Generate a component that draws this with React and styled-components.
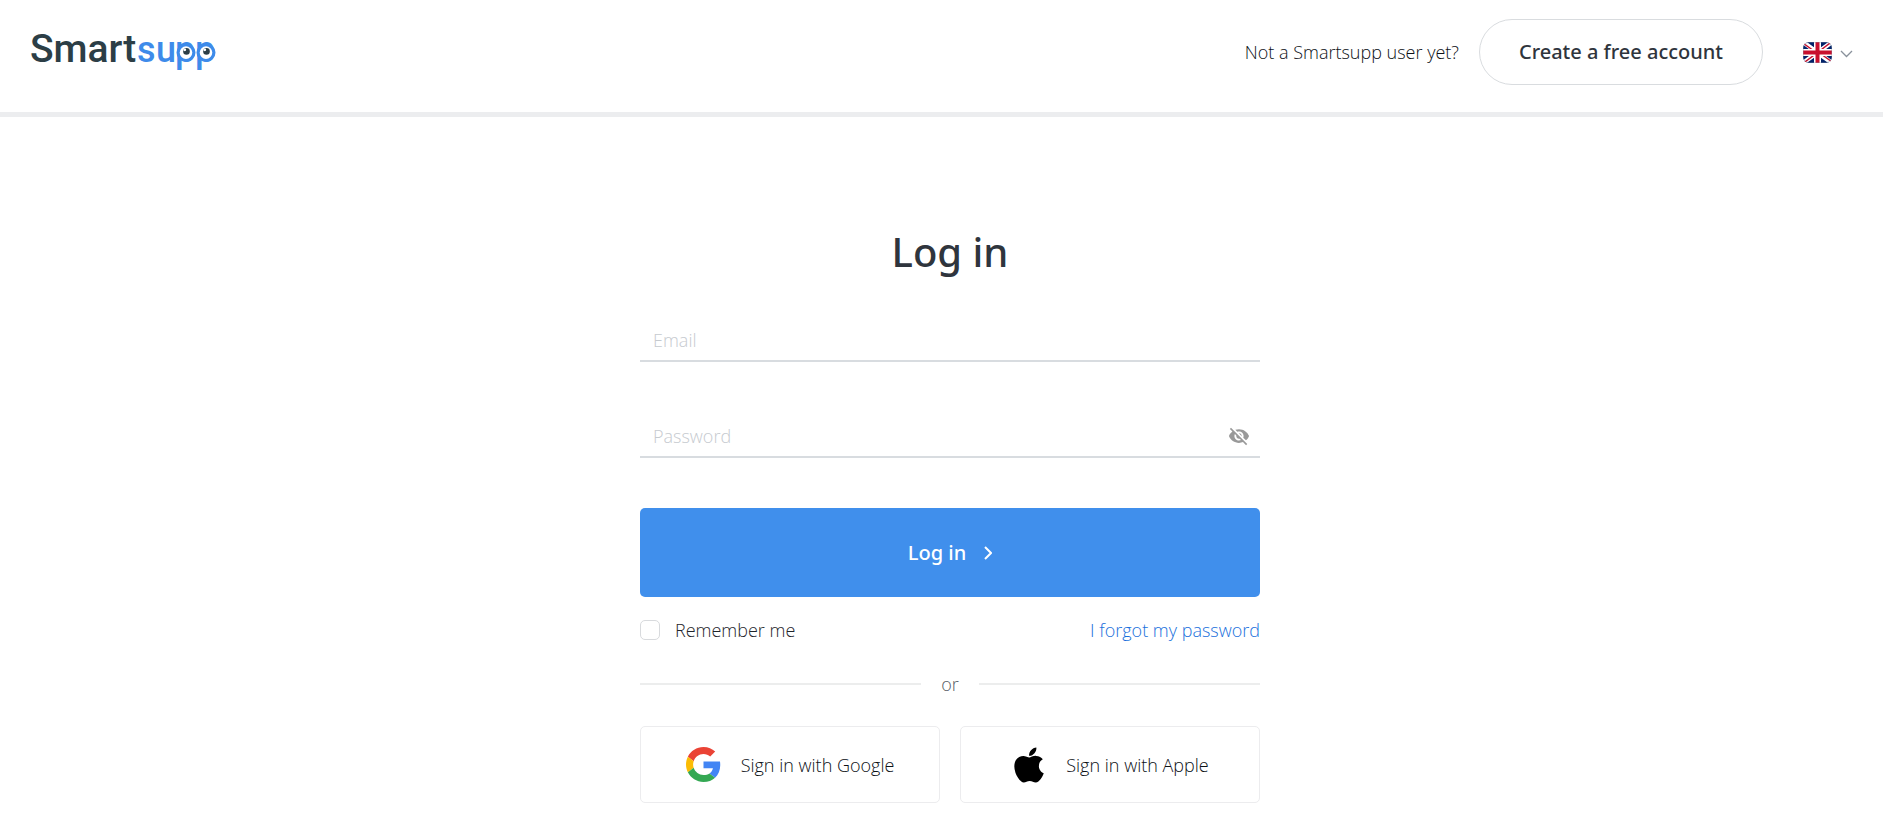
import React from 'react';
import styled, { createGlobalStyle } from 'styled-components';
import { MdVisibilityOff } from 'react-icons/md';
import { FaApple } from 'react-icons/fa';

const GlobalStyle = createGlobalStyle`
  *, *::before, *::after { box-sizing: border-box; }
  body {
    margin: 0;
    background: #fff;
    color: #0c1116;
    font-family: "Open Sans", "Noto Sans", sans-serif;
    font-size: 18px;
    font-weight: 300;
    line-height: 24px;
  }
  button, input { font: inherit; color: inherit; }
  svg { display: block; flex: none; }
`;

const mediumFont = '"Noto Sans", "Open Sans", sans-serif';

const Header = styled.header`
  display: flex;
  align-items: flex-start;
  justify-content: space-between;
  padding: 19px 30px 27px;
  border-bottom: 5px solid #ecedef;
`;

const LogoLink = styled.a`
  text-decoration: none;
`;

const HeaderActions = styled.div`
  display: flex;
  align-items: center;
`;

const SignUpButton = styled.button`
  height: 66px;
  margin: 0 40px 0 20px;
  padding: 0 39px;
  border: 1px solid #d9dcdf;
  border-radius: 33px;
  background: #fff;
  color: #2f353d;
  font-family: ${mediumFont};
  font-size: 20px;
  font-weight: 500;
`;

const LanguageButton = styled.button`
  display: flex;
  align-items: center;
  gap: 8px;
  padding: 0;
  border: 0;
  background: none;
`;

const Main = styled.main`
  padding: 103px 0 30px 17px;
`;

const Form = styled.form`
  display: flex;
  flex-direction: column;
  width: 100%;
  max-width: 620px;
  margin: 0 auto;
`;

const Title = styled.h1`
  margin: 0 0 37px;
  color: #2f353d;
  font-family: ${mediumFont};
  font-size: 40px;
  font-weight: 500;
  line-height: 64px;
  text-align: center;
`;

const Field = styled.label`
  display: flex;
  align-items: center;
  height: 41px;
  margin-bottom: ${(p) => (p.$last ? 50 : 55)}px;
  padding: 0 10px 2px 13px;
  border-bottom: 2px solid #d8dce0;
`;

const FieldInput = styled.input`
  flex: 1;
  min-width: 0;
  height: 36px;
  padding: 0;
  border: 0;
  outline: 0;
  background: none;
  &::placeholder { color: #c6cacf; opacity: 1; }
`;

const IconButton = styled.button`
  padding: 0;
  border: 0;
  background: none;
  color: #999;
`;

const SubmitButton = styled.button`
  display: flex;
  align-items: center;
  justify-content: center;
  gap: 18px;
  height: 89px;
  border: 0;
  border-radius: 5px;
  background: #408fec;
  color: #fff;
  font-family: ${mediumFont};
  font-size: 20px;
  font-weight: 500;
`;

const Options = styled.div`
  display: flex;
  align-items: center;
  justify-content: space-between;
  margin-top: 21px;
`;

const Remember = styled.label`
  display: flex;
  align-items: center;
  gap: 15px;
  color: #1e242b;
`;

const Checkbox = styled.input`
  appearance: none;
  width: 20px;
  height: 20px;
  margin: 0;
  border: 1px solid #d8dadd;
  border-radius: 5px;
  background: #fff;
  &:checked { background: #408fec; }
`;

const ForgotLink = styled.a`
  color: #1a70dc;
  text-decoration: none;
`;

const Divider = styled.div`
  display: flex;
  align-items: center;
  gap: 20px;
  margin: 30px 0;
  color: #555c64;
  &::before, &::after {
    content: "";
    flex: 1;
    height: 2px;
    background: #eceded;
  }
`;

const SocialRow = styled.div`
  display: grid;
  grid-template-columns: 1fr 1fr;
  gap: 20px;
`;

const SocialButton = styled.button`
  display: flex;
  align-items: center;
  justify-content: center;
  gap: 20px;
  height: 77px;
  border: 1px solid #ececee;
  border-radius: 5px;
  background: #fff;
`;

const SocialIcon = styled.span`
  display: flex;
  justify-content: center;
  width: 35px;
  color: #000;
`;

const LogoText = styled.text`
  font-family: Roboto, sans-serif;
  font-size: ${(p) => p.$size}px;
  font-weight: 500;
`;

function Eye({ x }) {
  return (
    <g>
      <circle cx={x} cy="24.6" r="7.9" fill="#fff" stroke="#3e8bea" strokeWidth="3.2" />
      <circle cx={x + 0.5} cy="23.4" r="3.3" fill="#2c3e46" />
      <circle cx={x - 1.2} cy="21.8" r="1.4" fill="#fff" />
    </g>
  );
}

function Logo() {
  return (
    <svg width="190" height="60" viewBox="0 -9 190 60" role="img" aria-label="Smartsupp">
      <LogoText $size={39} x="0" y="34" fill="#2c3e46">Smart</LogoText>
      <LogoText $size={36} x="107 126 145 165" y="34" fill="#3e8bea">supp</LogoText>
      <Eye x={156} />
      <Eye x={176} />
    </svg>
  );
}

function Flag() {
  return (
    <svg width="29" height="21" viewBox="0 0 29 21" aria-hidden="true">
      <clipPath id="flag-shape"><rect width="29" height="21" rx="6" /></clipPath>
      <g clipPath="url(#flag-shape)">
        <path d="M0 0h29v21H0z" fill="#012169" />
        <path d="M0 0l29 21M29 0L0 21" stroke="#fff" strokeWidth="4.4" />
        <path d="M-.5 .8l14 10M15.5 9.7L29-.5M29.5 20.2l-14-10M13.5 11.3L0 21.5" stroke="#c8102e" strokeWidth="1.4" />
        <path d="M14.5 0v21M0 10.5h29" stroke="#fff" strokeWidth="7" />
        <path d="M14.5 0v21M0 10.5h29" stroke="#c8102e" strokeWidth="4" />
      </g>
      <rect x=".5" y=".5" width="28" height="20" rx="5.5" fill="none" stroke="#8c94a3" strokeOpacity=".35" />
    </svg>
  );
}

function GoogleIcon() {
  return (
    <svg width="35" height="35" viewBox="0 0 48 48" aria-hidden="true">
      <path fill="#EA4335" d="M24 9.5c3.54 0 6.71 1.22 9.21 3.6l6.85-6.85C35.9 2.38 30.47 0 24 0 14.62 0 6.51 5.38 2.56 13.22l7.98 6.19C12.43 13.72 17.74 9.5 24 9.5z" />
      <path fill="#4285F4" d="M46.98 24.55c0-1.57-.15-3.09-.38-4.55H24v9.02h12.94c-.58 2.96-2.26 5.48-4.78 7.18l7.73 6c4.51-4.18 7.09-10.36 7.09-17.65z" />
      <path fill="#FBBC05" d="M10.53 28.59c-.48-1.45-.76-2.99-.76-4.59s.27-3.14.76-4.59l-7.98-6.19C.92 16.46 0 20.12 0 24c0 3.88.92 7.54 2.56 10.78l7.97-6.19z" />
      <path fill="#34A853" d="M24 48c6.48 0 11.93-2.13 15.89-5.81l-7.73-6c-2.15 1.45-4.92 2.3-8.16 2.3-6.26 0-11.57-4.22-13.47-9.91l-7.98 6.19C6.51 42.62 14.62 48 24 48z" />
    </svg>
  );
}

export default function App() {
  return (
    <>
      <GlobalStyle />
      <Header>
        <LogoLink href="#"><Logo /></LogoLink>
        <HeaderActions>
          <span>Not a Smartsupp user yet?</span>
          <SignUpButton type="button">Create a free account</SignUpButton>
          <LanguageButton type="button" aria-label="Language: English">
            <Flag />
            <svg width="13" height="11" viewBox="0 0 13 11" fill="none" stroke="#89919b" strokeWidth="1.3">
              <path d="M1 4l5.5 5.5L12 4" />
            </svg>
          </LanguageButton>
        </HeaderActions>
      </Header>
      <Main>
        <Form onSubmit={(e) => e.preventDefault()}>
          <Title>Log in</Title>
          <Field>
            <FieldInput type="email" placeholder="Email" aria-label="Email" />
          </Field>
          <Field $last>
            <FieldInput type="password" placeholder="Password" aria-label="Password" />
            <IconButton type="button" aria-label="Show password"><MdVisibilityOff size={22} /></IconButton>
          </Field>
          <SubmitButton type="submit">
            Log in
            <svg width="8" height="14" viewBox="0 0 8 14" fill="none" stroke="#fff" strokeWidth="2">
              <path d="M1 1l6 6-6 6" />
            </svg>
          </SubmitButton>
          <Options>
            <Remember><Checkbox type="checkbox" />Remember me</Remember>
            <ForgotLink href="#">I forgot my password</ForgotLink>
          </Options>
          <Divider>or</Divider>
          <SocialRow>
            <SocialButton type="button">
              <SocialIcon><GoogleIcon /></SocialIcon>
              Sign in with Google
            </SocialButton>
            <SocialButton type="button">
              <SocialIcon><FaApple size={40} /></SocialIcon>
              Sign in with Apple
            </SocialButton>
          </SocialRow>
        </Form>
      </Main>
    </>
  );
}
